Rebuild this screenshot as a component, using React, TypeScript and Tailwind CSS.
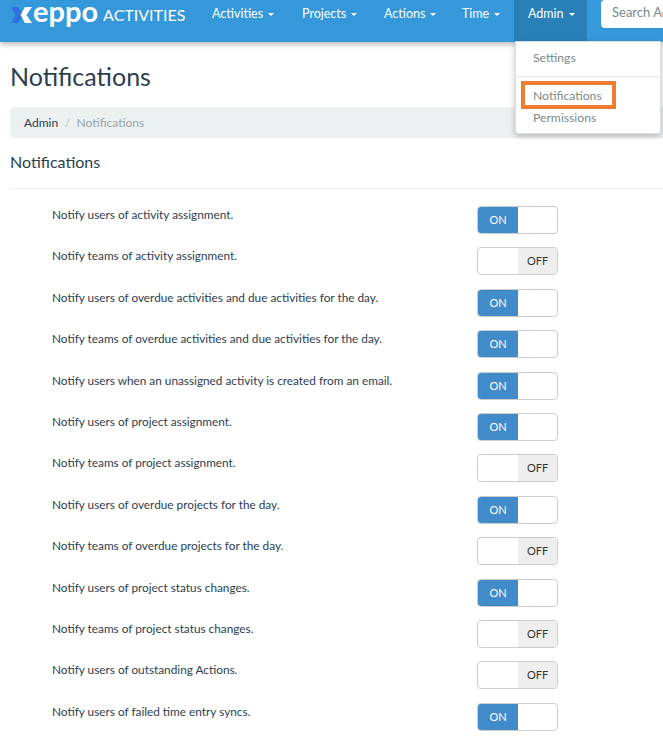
import React from 'react'

const NAV = [
  { label: 'Activities', w: 'w-[90px]' },
  { label: 'Projects', w: 'w-[82px]' },
  { label: 'Actions', w: 'w-[78px]' },
  { label: 'Time', w: 'w-[66px]' },
]

const ROWS: [string, boolean][] = [
  ['Notify users of activity assignment.', true],
  ['Notify teams of activity assignment.', false],
  ['Notify users of overdue activities and due activities for the day.', true],
  ['Notify teams of overdue activities and due activities for the day.', true],
  ['Notify users when an unassigned activity is created from an email.', true],
  ['Notify users of project assignment.', true],
  ['Notify teams of project assignment.', false],
  ['Notify users of overdue projects for the day.', true],
  ['Notify teams of overdue projects for the day.', false],
  ['Notify users of project status changes.', true],
  ['Notify teams of project status changes.', false],
  ['Notify users of outstanding Actions.', false],
  ['Notify users of failed time entry syncs.', true],
]

const Caret = () => (
  <span className="ml-[5px] inline-block w-0 h-0 border-x-[3.500px] border-x-transparent border-t-[3.500px] border-t-white align-middle" />
)

const Toggle = ({ on }: { on: boolean }) => (
  <div className="flex w-[81px] h-[28px] rounded-[4px] border border-[#cccccc] overflow-hidden bg-white text-[11px] leading-[26px] text-center">
    {on ? (
      <>
        <div className="w-[40px] bg-[#428bca] text-white">ON</div>
        <div className="flex-1" />
      </>
    ) : (
      <>
        <div className="w-[40px]" />
        <div className="flex-1 bg-[#eeeeee] text-[#333333]">OFF</div>
      </>
    )}
  </div>
)

const App = () => {
  return (
    <div className="relative w-[663px] h-[742px] overflow-hidden bg-white font-['Lato',sans-serif] text-[#2c3e50]">
      <header className="flex h-[42px] bg-[#3498db] shadow-[0_2px_6px_rgba(0,0,0,0.3)] text-white relative">
        <div className="flex items-center w-[198px] pl-[11px] pb-[12px] shrink-0 whitespace-nowrap">
          <svg width="21" height="16" viewBox="0 0 21 16" className="shrink-0">
            <path d="M0 0h7l5.500 8L7 16H0l4.500-8z" fill="#2f6fe0" />
            <path d="M14 0h7l-5.500 8 5.500 8h-7L9.500 8z" fill="#ffffff" />
          </svg>
          <span className="ml-[1px] mb-[8px] text-[29px] leading-[22px] font-bold">eppo</span>
          <span className="text-[16px] ml-[5px]">ACTIVITIES</span>
        </div>
        <nav className="flex text-[12.500px] shrink-0">
          {NAV.map((n) => (
            <div key={n.label} className={`${n.w} pl-[14px] pt-[5px] whitespace-nowrap`}>
              {n.label}
              <Caret />
            </div>
          ))}
          <div className="w-[73px] h-[41px] bg-[#2980b9] pl-[14px] pt-[5px] whitespace-nowrap">
            Admin
            <Caret />
          </div>
        </nav>
        <div className="ml-[14px] w-[62px] h-[28px] bg-white rounded-l-[4px] text-[#7b8a8b] text-[13px] leading-[25px] pl-[11px] whitespace-nowrap overflow-hidden">
          Search Activities
        </div>
      </header>

      <div className="absolute left-[515px] top-[41px] w-[146px] h-[93px] bg-white border border-[#dddddd] rounded-b-[3px] shadow-[0_2px_6px_rgba(0,0,0,0.25)] z-10 text-[12.200px] text-[#7b8a8b]">
        <div className="pl-[17px] pt-[7px] leading-[18px]">Settings</div>
        <div className="mt-[9px] h-px bg-[#e7e9ea]" />
        <div className="pl-[17px] mt-[10px] leading-[18px]">Notifications</div>
        <div className="pl-[17px] mt-[4px] leading-[18px]">Permissions</div>
        <div className="absolute left-[5px] top-[39px] w-[95px] h-[28px] border-[4px] border-[#ed7d31]" />
      </div>

      <main className="pl-[10px]">
        <h1 className="mt-[17px] text-[25px] leading-[34px] font-normal">Notifications</h1>
        <div className="mt-[14px] h-[31px] bg-[#ecf0f1] rounded-l-[4px] pl-[14px] text-[12px] leading-[31px]">
          <span>Admin</span>
          <span className="text-[#b4bcc2] mx-[6.500px]">/</span>
          <span className="text-[#95a5a6]">Notifications</span>
        </div>
        <h2 className="mt-[14px] text-[16px] leading-[20px] font-normal">Notifications</h2>
        <div className="mt-[16px] h-px bg-[#eeeeee]" />
        <div className="mt-[17px] flex flex-col gap-[13.400px]">
          {ROWS.map(([text, on]) => (
            <div key={text} className="flex items-start h-[28px] pl-[42px]">
              <div className="w-[425px] pt-[1px] text-[11.800px] leading-[16px] whitespace-nowrap">{text}</div>
              <Toggle on={on} />
            </div>
          ))}
        </div>
      </main>
    </div>
  )
}

export default App
